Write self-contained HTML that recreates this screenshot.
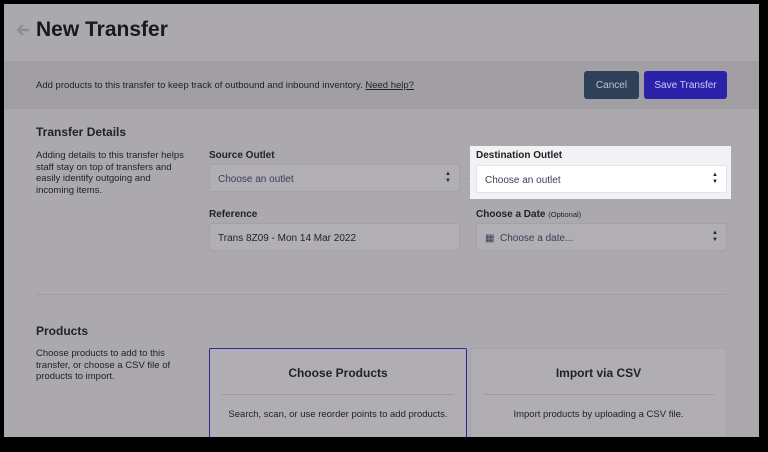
<!DOCTYPE html>
<html><head><meta charset="utf-8"><style>
*{box-sizing:border-box;margin:0;padding:0}
body{width:768px;height:452px;background:#000;font-family:"Liberation Sans",sans-serif;overflow:hidden;position:relative}
.page{position:absolute;left:4px;top:4px;width:755px;height:433px;background:#aba9ae;overflow:hidden}
.a{position:absolute}
.t{color:#222;}
.lbl{font-size:10px;font-weight:bold;color:#222}
.inp{position:absolute;height:28px;background:#b1afb4;border:1px solid #a3a1a6;border-radius:2px;font-size:10px;color:#3a3f55;padding:9px 8px}
.arr{position:absolute;right:8px;top:6px;font-size:6px;line-height:7px;color:#222}
.card{position:absolute;top:344px;height:90px;background:#b0aeb3;border:1px solid #a5a3a8;border-radius:2px;text-align:center}
.card h3{font-size:12px;font-weight:bold;color:#222;margin-top:17px}
.card hr{border:0;border-top:1px solid #9d9ba0;margin:14px 12px 0}
.card p{font-size:9.5px;color:#222;margin-top:14px}
.btn{position:absolute;top:67px;height:28px;border-radius:3px;font-size:10px;display:flex;align-items:center;justify-content:center}
</style></head><body>
<div class="page">
 <svg class="a" style="left:11px;top:19px" width="16" height="14" viewBox="0 0 16 14"><path d="M14 7H3M8 2L3 7l5 5" stroke="#8f8d92" stroke-width="2.4" fill="none"/></svg>
 <div class="a t" style="left:32px;top:14px;font-size:21px;font-weight:bold;color:#1a1a1a">New Transfer</div>
 <div class="a" style="left:0;top:57px;width:755px;height:48px;background:#a19fa4"></div>
 <div class="a t" style="left:32px;top:76px;font-size:9.5px">Add products to this transfer to keep track of outbound and inbound inventory. <u>Need help?</u></div>
 <div class="btn" style="left:580px;width:55px;background:#2f4059;color:#c0c4cc">Cancel</div>
 <div class="btn" style="left:640px;width:83px;background:#2a22aa;color:#cfcdf0">Save Transfer</div>
 <div class="a t" style="left:32px;top:121px;font-size:12px;font-weight:bold">Transfer Details</div>
 <div class="a t" style="left:32px;top:146px;width:150px;font-size:9.5px;line-height:11.5px">Adding details to this transfer helps staff stay on top of transfers and easily identify outgoing and incoming items.</div>
 <div class="a lbl" style="left:205px;top:146px">Source Outlet</div>
 <div class="inp" style="left:205px;top:160px;width:251px">Choose an outlet<div class="arr">▲<br>▼</div></div>
 <div class="a" style="left:459px;top:169px;font-size:8px;color:#999">→</div>
 <div class="a" style="left:466px;top:142px;width:261px;height:53px;background:#f2f1f4"></div>
 <div class="a lbl" style="left:472px;top:146px">Destination Outlet</div>
 <div class="inp" style="left:472px;top:161px;width:251px;background:#fff;border-color:#e4e4e8">Choose an outlet<div class="arr">▲<br>▼</div></div>
 <div class="a lbl" style="left:205px;top:205px">Reference</div>
 <div class="inp" style="left:205px;top:219px;width:251px;color:#222">Trans 8Z09 - Mon 14 Mar 2022</div>
 <div class="a lbl" style="left:472px;top:205px">Choose a Date <span style="font-weight:normal;font-size:7.5px">(Optional)</span></div>
 <div class="inp" style="left:472px;top:219px;width:251px">&#9638;&nbsp; Choose a date...<div class="arr">▲<br>▼</div></div>
 <div class="a" style="left:32px;top:290px;width:691px;height:1px;background:#9f9da2"></div>
 <div class="a t" style="left:32px;top:320px;font-size:12px;font-weight:bold">Products</div>
 <div class="a t" style="left:32px;top:344px;width:140px;font-size:9.5px;line-height:11.5px">Choose products to add to this transfer, or choose a CSV file of products to import.</div>
 <div class="card" style="left:205px;width:258px;border:1px solid #2a2a90"><h3>Choose Products</h3><hr><p>Search, scan, or use reorder points to add products.</p></div>
 <div class="card" style="left:466px;width:257px"><h3>Import via CSV</h3><hr><p>Import products by uploading a CSV file.</p></div>
</div>
</body></html>
